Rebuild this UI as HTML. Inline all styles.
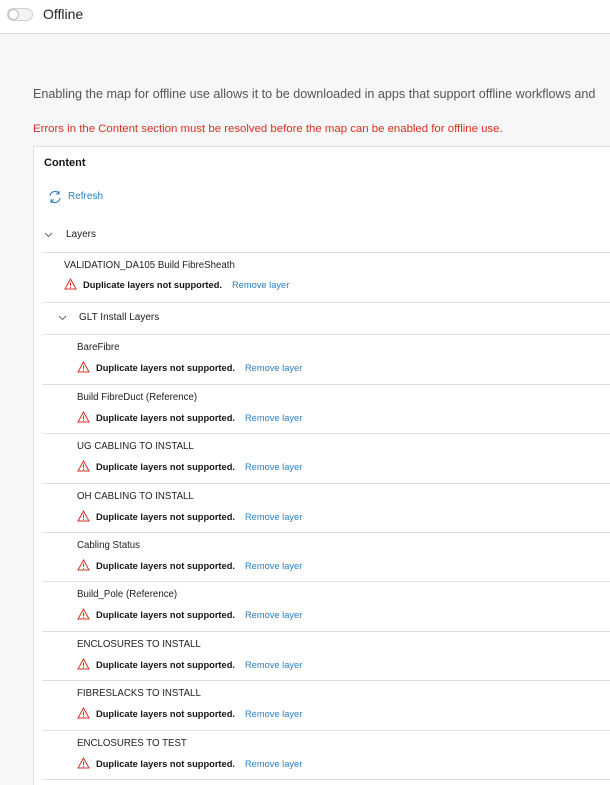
<!DOCTYPE html><html><head><style>
html,body{margin:0;width:610px;height:785px;overflow:hidden}
body{background:#f7f7f7;font-family:"Liberation Sans",sans-serif;position:relative}
.a{position:absolute;white-space:nowrap;line-height:14px}
.hl{position:absolute;left:42px;right:0;height:1px;background:#e0e0e0}
.t{font-size:9.7px;color:#222}
.e{font-size:9.3px;color:#151515;font-weight:bold}
.e span{color:#2a7fc4;font-weight:normal;margin-left:10px}
.w{position:absolute}
</style></head><body>
<div style="position:absolute;left:0;top:0;width:610px;height:33px;background:#fff;border-bottom:1px solid #ddd"></div>
<div style="position:absolute;left:7px;top:8px;width:24px;height:11px;border:1px solid #d0d0d0;border-radius:7px;background:#f3f3f3"></div>
<div style="position:absolute;left:8px;top:9px;width:11px;height:11px;border-radius:50%;background:#fff;border:1px solid #bbb;box-sizing:border-box"></div>
<div class="a" style="left:43px;top:7px;font-size:14px;color:#222">Offline</div>
<div class="a" style="left:33px;top:87px;font-size:12.6px;color:#555">Enabling the map for offline use allows it to be downloaded in apps that support offline workflows and</div>
<div class="a" style="left:33px;top:122px;font-size:11.4px;color:#d83020">Errors in the Content section must be resolved before the map can be enabled for offline use.</div>
<div style="position:absolute;left:33px;top:146px;width:600px;height:660px;background:#fff;border:1px solid #ddd"></div>
<div class="a" style="left:44px;top:156px;font-size:11px;font-weight:bold;color:#151515">Content</div>
<svg class="w" style="left:48px;top:190px" width="14" height="14" viewBox="0 0 14 14" fill="none" stroke="#2a7fc4" stroke-width="1.1"><path d="M2 6A5 5 0 0 1 11 3.5M12 8A5 5 0 0 1 3 10.5"/><path d="M11 1v3H8M3 13v-3h3"/></svg>
<div class="a" style="left:68px;top:190px;font-size:10px;color:#2a7fc4">Refresh</div>
<svg class="w" style="left:44px;top:232px" width="9" height="6" viewBox="0 0 9 6" fill="none" stroke="#666"><path d="M1 1l3.5 3.5L8 1"/></svg>
<div class="a" style="left:66px;top:228px;font-size:10px;color:#222">Layers</div>
<div class="hl" style="top:252px"></div>
<div class="a t" style="left:64px;top:259px">VALIDATION_DA105 Build FibreSheath</div>
<svg class="w" style="left:64px;top:278px" width="13" height="12" viewBox="0 0 13 12" fill="none" stroke="#d83020"><path d="M6.5 1L12 11H1z"/><path d="M6.5 4.5v3.5M6.5 9v1"/></svg>
<div class="a e" style="left:83px;top:278px">Duplicate layers not supported.<span>Remove layer</span></div>
<div class="hl" style="top:302px"></div>
<svg class="w" style="left:58px;top:315px" width="9" height="6" viewBox="0 0 9 6" fill="none" stroke="#666"><path d="M1 1l3.5 3.5L8 1"/></svg>
<div class="a" style="left:79px;top:311px;font-size:10px;color:#222">GLT Install Layers</div>
<div class="hl" style="top:334px"></div>
<div id="rows"></div>
<script>
var n=["BareFibre","Build FibreDuct (Reference)","UG CABLING TO INSTALL","OH CABLING TO INSTALL","Cabling Status","Build_Pole (Reference)","ENCLOSURES TO INSTALL","FIBRESLACKS TO INSTALL","ENCLOSURES TO TEST"];
var L=[334,384,433,483,532,581,631,680,730,779],h="";
for(var i=0;i<9;i++){var y=L[i];
h+='<div class="a t" style="left:77px;top:'+(y+7)+'px">'+n[i]+'</div>';
h+='<svg class="w" style="left:77px;top:'+(y+27)+'px" width="13" height="12" viewBox="0 0 13 12" fill="none" stroke="#d83020"><path d="M6.5 1L12 11H1z"/><path d="M6.5 4.5v3.5M6.5 9v1"/></svg>';
h+='<div class="a e" style="left:96px;top:'+(y+27)+'px">Duplicate layers not supported.<span>Remove layer</span></div>';
h+='<div class="hl" style="top:'+L[i+1]+'px"></div>';}
document.getElementById("rows").outerHTML=h;
</script>
</body></html>
